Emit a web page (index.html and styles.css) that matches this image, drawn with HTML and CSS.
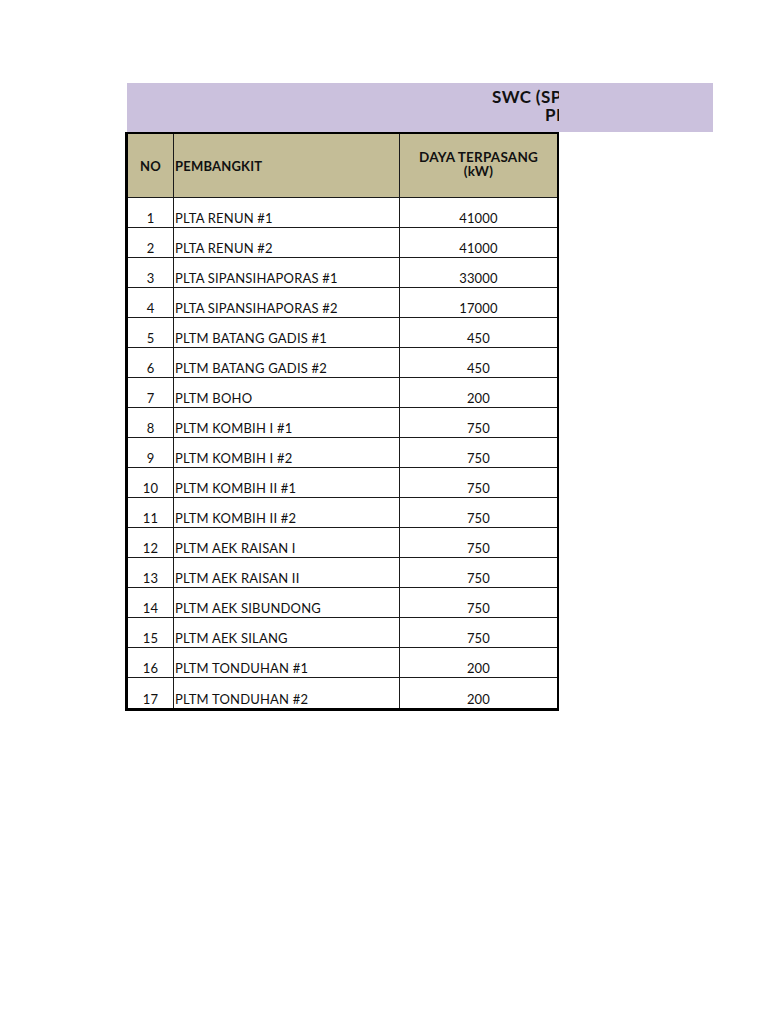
FILE: index.html
```html
<!DOCTYPE html>
<html>
<head>
<meta charset="utf-8">
<link rel="stylesheet" href="styles.css">
</head>
<body>
<div class="sheet">
  <div class="band">
    <div class="title-clip">
      <div class="title-line l1">SWC (SPARE WATER CAPACITY)</div>
      <div class="title-line l2">PLTA / PLTM</div>
    </div>
  </div>
  <div class="table-wrap">
    <table class="grid">
      <thead>
        <tr>
          <th class="c-no">NO</th>
          <th class="c-name">PEMBANGKIT</th>
          <th class="c-kw">DAYA TERPASANG<br>(kW)</th>
        </tr>
      </thead>
      <tbody>
        <tr><td class="c-no">1</td><td class="c-name">PLTA RENUN #1</td><td class="c-kw">41000</td></tr>
        <tr><td class="c-no">2</td><td class="c-name">PLTA RENUN #2</td><td class="c-kw">41000</td></tr>
        <tr><td class="c-no">3</td><td class="c-name">PLTA SIPANSIHAPORAS #1</td><td class="c-kw">33000</td></tr>
        <tr><td class="c-no">4</td><td class="c-name">PLTA SIPANSIHAPORAS #2</td><td class="c-kw">17000</td></tr>
        <tr><td class="c-no">5</td><td class="c-name">PLTM BATANG GADIS #1</td><td class="c-kw">450</td></tr>
        <tr><td class="c-no">6</td><td class="c-name">PLTM BATANG GADIS #2</td><td class="c-kw">450</td></tr>
        <tr><td class="c-no">7</td><td class="c-name">PLTM BOHO</td><td class="c-kw">200</td></tr>
        <tr><td class="c-no">8</td><td class="c-name">PLTM KOMBIH I #1</td><td class="c-kw">750</td></tr>
        <tr><td class="c-no">9</td><td class="c-name">PLTM KOMBIH I #2</td><td class="c-kw">750</td></tr>
        <tr><td class="c-no">10</td><td class="c-name">PLTM KOMBIH II #1</td><td class="c-kw">750</td></tr>
        <tr><td class="c-no">11</td><td class="c-name">PLTM KOMBIH II #2</td><td class="c-kw">750</td></tr>
        <tr><td class="c-no">12</td><td class="c-name">PLTM AEK RAISAN I</td><td class="c-kw">750</td></tr>
        <tr><td class="c-no">13</td><td class="c-name">PLTM AEK RAISAN II</td><td class="c-kw">750</td></tr>
        <tr><td class="c-no">14</td><td class="c-name">PLTM AEK SIBUNDONG</td><td class="c-kw">750</td></tr>
        <tr><td class="c-no">15</td><td class="c-name">PLTM AEK SILANG</td><td class="c-kw">750</td></tr>
        <tr><td class="c-no">16</td><td class="c-name">PLTM TONDUHAN #1</td><td class="c-kw">200</td></tr>
        <tr><td class="c-no">17</td><td class="c-name">PLTM TONDUHAN #2</td><td class="c-kw">200</td></tr>
      </tbody>
    </table>
  </div>
</div>
</body>
</html>
```

FILE: styles.css
```css
html, body {
  margin: 0;
  padding: 0;
  background: #ffffff;
}

body {
  font-family: Lato, "Liberation Sans", sans-serif;
  color: #111111;
}

.sheet {
  margin: 83px 0 0 127px;
  width: 586px;
}

.band {
  height: 49px;
  background: #cbc1dd;
}

.title-clip {
  width: 432px;
  height: 49px;
  overflow: hidden;
  font-weight: 700;
  font-size: 17px;
  letter-spacing: 0.4px;
  line-height: 18px;
  white-space: nowrap;
  padding-top: 5px;
  box-sizing: border-box;
}

.title-line.l1 {
  padding-left: 365px;
}

.title-line.l2 {
  padding-left: 418px;
}

.table-wrap {
  margin-left: -2px;
  width: 434px;
  box-sizing: border-box;
  border-left: 3px solid #000;
  border-top: 2px solid #000;
  border-right: 2px solid #000;
  border-bottom: 3px solid #000;
}

.grid {
  border-collapse: separate;
  border-spacing: 0;
  width: 429px;
  table-layout: fixed;
}

.grid th,
.grid td {
  padding: 0;
  border-right: 1px solid #1a1a1a;
  border-bottom: 1px solid #1a1a1a;
  font-size: 13px;
  letter-spacing: 0.2px;
  white-space: nowrap;
  overflow: hidden;
}

.grid th:last-child,
.grid td:last-child {
  border-right: none;
}

.grid tbody tr:last-child td {
  border-bottom: none;
}

.grid th {
  background: #c4bd97;
  height: 64px;
  box-sizing: border-box;
  font-weight: 700;
  vertical-align: middle;
}

.grid th.c-kw {
  font-size: 13.5px;
  line-height: 14px;
  padding-bottom: 4px;
}

.grid td {
  height: 30px;
  vertical-align: bottom;
  padding-bottom: 1px;
  box-sizing: border-box;
  line-height: 15px;
}

.c-no {
  width: 46px;
  text-align: center;
}

.c-name {
  width: 226px;
  text-align: left;
  padding-left: 1px !important;
}

.c-kw {
  width: 157px;
  text-align: center;
}
```
